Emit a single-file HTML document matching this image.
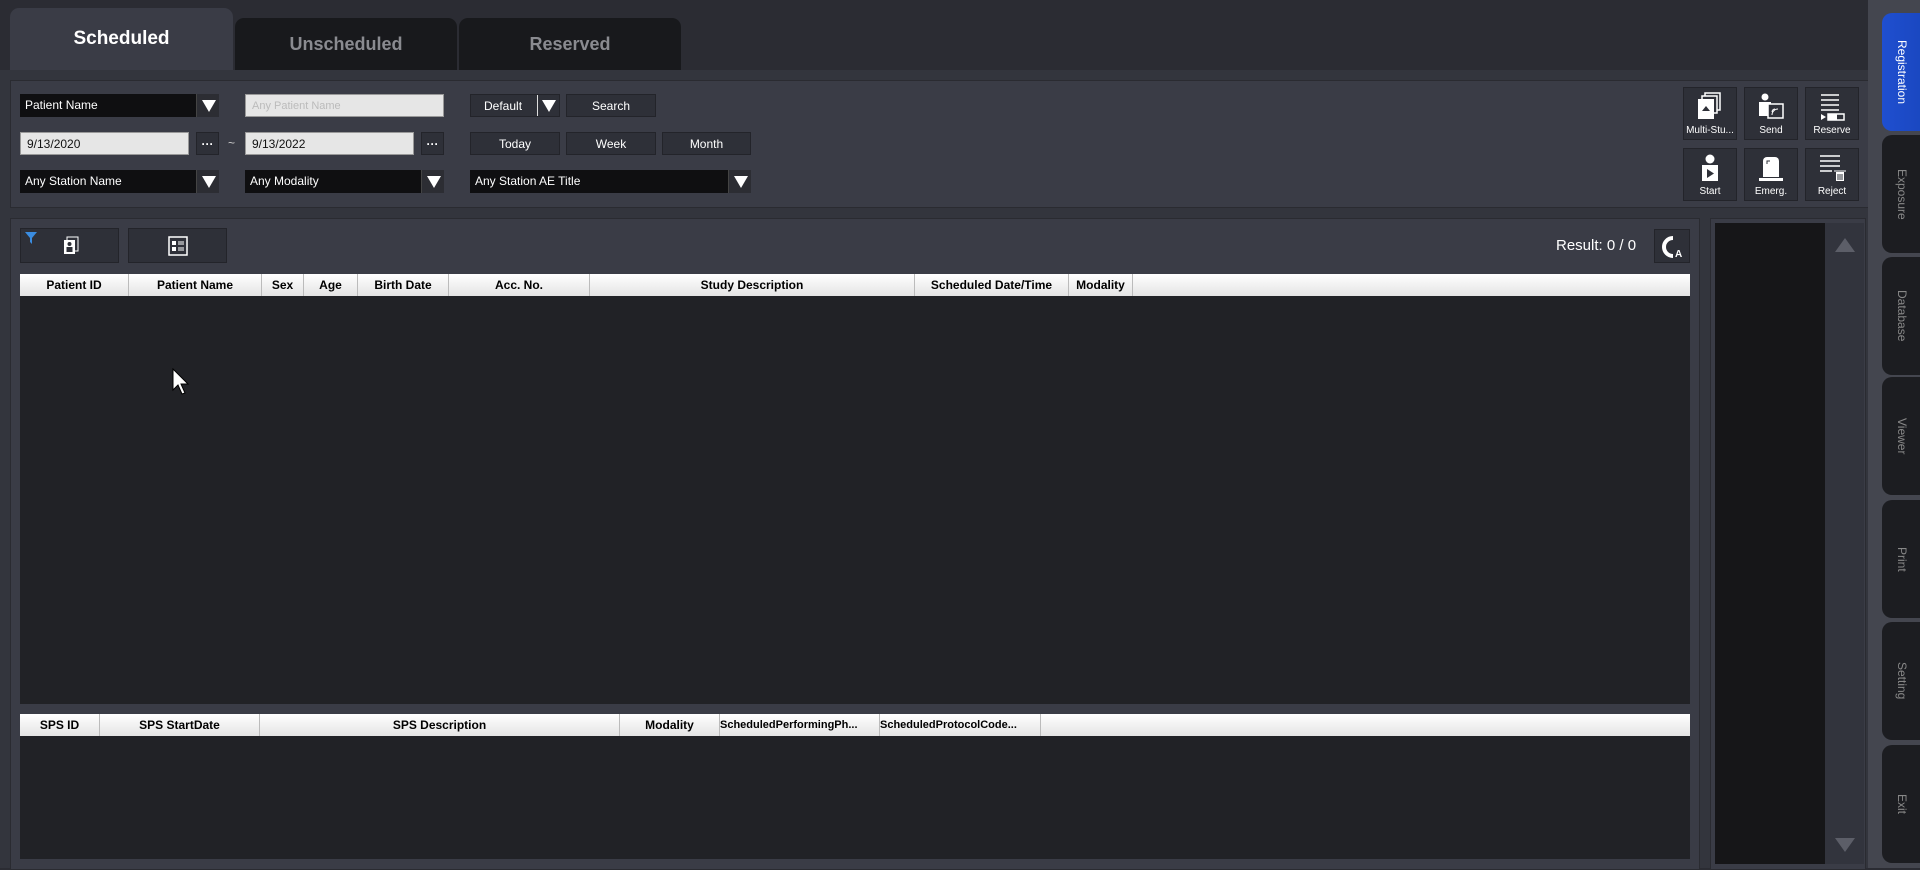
<!DOCTYPE html>
<html><head><meta charset="utf-8"><style>
*{box-sizing:border-box;margin:0;padding:0}
body{width:1920px;height:868px;background:#2b2c33;position:relative;overflow:hidden;font-family:"Liberation Sans",sans-serif;font-size:12px;color:#fff}
.a{position:absolute}
.tab{position:absolute;border-radius:9px 9px 0 0;text-align:center;font-weight:bold;font-size:18px}
.panel{background:#3a3c46;border:1px solid #2a2b31}
.dd{position:absolute;background:#0f0f11;height:23px;color:#fff;font-size:12px;line-height:23px;padding-left:5px}
.dd .ar{position:absolute;right:0;top:0;width:23px;height:23px;background:#2c2d33;border-left:1px solid #444}
.dd .ar:after{content:"";position:absolute;left:5px;top:6px;border-left:7px solid transparent;border-right:7px solid transparent;border-top:12px solid #fff}
.inp{position:absolute;background:#e6e6e6;height:23px;color:#111;line-height:23px;padding-left:6px;border:1px solid #999}
.btn{position:absolute;background:#2e3038;border:1px solid #23242a;height:23px;line-height:22px;text-align:center;color:#fff;font-size:12px}
.ab{position:absolute;width:54px;height:53px;background:#2e3038;border:1px solid #23242a;font-size:10px;text-align:center}
.ab span{position:absolute;bottom:3px;left:0;right:0}
.hdr{position:absolute;height:22px;background:linear-gradient(#fff,#e4e4e4);color:#000;font-weight:bold;font-size:12px}
.hdr div{position:absolute;top:0;height:22px;line-height:22px;text-align:center;border-right:1px solid #bbb;white-space:nowrap;overflow:hidden}
.side{position:absolute;left:1882px;width:40px;height:118px;background:#1c1d21;border-radius:10px 0 0 10px;display:flex;align-items:center;justify-content:center}
.side div{writing-mode:vertical-rl;color:#888;font-size:12px}
</style></head><body>
<div class="a" style="left:0;top:70px;width:1868px;height:798px;background:#33353d"></div>
<div class="tab" style="left:10px;top:8px;width:223px;height:62px;background:#3a3c46;line-height:62px;color:#fff;font-size:19px">Scheduled</div>
<div class="tab" style="left:235px;top:18px;width:222px;height:52px;background:#18191c;line-height:52px;color:#8a8b90">Unscheduled</div>
<div class="tab" style="left:459px;top:18px;width:222px;height:52px;background:#18191c;line-height:52px;color:#8a8b90">Reserved</div>

<div class="a panel" style="left:10px;top:80px;width:1860px;height:128px"></div>
<div class="dd" style="left:20px;top:94px;width:199px">Patient Name<div class="ar"></div></div>
<div class="inp" style="left:245px;top:94px;width:199px;color:#bbb;font-size:11px">Any Patient Name</div>
<div class="btn" style="left:470px;top:94px;width:90px;text-align:left;padding-left:13px">Default<div class="ar" style="position:absolute;right:0;top:0;width:22px;height:21px;border-left:1px solid #ddd"><div style="position:absolute;left:4px;top:5px;border-left:7px solid transparent;border-right:7px solid transparent;border-top:12px solid #fff"></div></div></div>
<div class="btn" style="left:566px;top:94px;width:90px">Search</div>
<div class="inp" style="left:20px;top:132px;width:169px">9/13/2020</div>
<div class="btn" style="left:196px;top:132px;width:23px;font-weight:bold">···</div>
<div class="a" style="left:228px;top:136px;color:#ccc">~</div>
<div class="inp" style="left:245px;top:132px;width:169px">9/13/2022</div>
<div class="btn" style="left:421px;top:132px;width:23px;font-weight:bold">···</div>
<div class="btn" style="left:470px;top:132px;width:90px">Today</div>
<div class="btn" style="left:566px;top:132px;width:90px">Week</div>
<div class="btn" style="left:662px;top:132px;width:89px">Month</div>
<div class="dd" style="left:20px;top:170px;width:199px">Any Station Name<div class="ar"></div></div>
<div class="dd" style="left:245px;top:170px;width:199px">Any Modality<div class="ar"></div></div>
<div class="dd" style="left:470px;top:170px;width:281px">Any Station AE Title<div class="ar"></div></div>

<div class="ab" style="left:1683px;top:87px"><svg width="30" height="30" style="margin-top:4px" viewBox="0 0 30 30"><rect x="10" y="1" width="15" height="17" fill="none" stroke="#fff" stroke-width="1.5"/><rect x="7" y="4" width="15" height="17" fill="#2e3038" stroke="#fff" stroke-width="1.5"/><rect x="3" y="7" width="16" height="20" fill="#fff"/><path d="M7 19h8l-4-5z" fill="#2e3038"/></svg><span>Multi-Stu...</span></div>
<div class="ab" style="left:1744px;top:87px"><svg width="30" height="30" style="margin-top:4px" viewBox="0 0 30 30"><circle cx="9" cy="5" r="3.5" fill="#fff"/><path d="M3 10h12v14H3z" fill="#fff"/><rect x="12" y="12" width="15" height="14" fill="#2e3038" stroke="#fff" stroke-width="1.5"/><path d="M16 23a6 6 0 0 1 6-6M16 20a3 3 0 0 1 3-3" stroke="#fff" fill="none"/></svg><span>Send</span></div>
<div class="ab" style="left:1805px;top:87px"><svg width="30" height="30" style="margin-top:4px" viewBox="0 0 30 30"><path d="M4 3h18M4 8h18M4 13h18M4 18h18" stroke="#fff" stroke-width="1.5"/><path d="M4 22v6l5-3z" fill="#fff"/><rect x="11" y="22" width="16" height="6" fill="none" stroke="#fff" stroke-width="1.5"/><rect x="11" y="22" width="9" height="6" fill="#fff"/></svg><span>Reserve</span></div>
<div class="ab" style="left:1683px;top:148px"><svg width="30" height="30" style="margin-top:4px" viewBox="0 0 30 30"><circle cx="15" cy="6" r="4.5" fill="#fff"/><path d="M7 12h16v16H7z" fill="#fff"/><path d="M12 16v9l7-4.5z" fill="#2e3038"/></svg><span>Start</span></div>
<div class="ab" style="left:1744px;top:148px"><svg width="30" height="30" style="margin-top:4px" viewBox="0 0 30 30"><path d="M7 24V8a4 4 0 0 1 4-4h8a4 4 0 0 1 4 4v16z" fill="#fff"/><rect x="3" y="25" width="24" height="3" fill="#fff"/><path d="M11 11v-3h3" stroke="#2e3038" fill="none"/></svg><span>Emerg.</span></div>
<div class="ab" style="left:1805px;top:148px"><svg width="30" height="30" style="margin-top:4px" viewBox="0 0 30 30"><path d="M3 3h20M3 8h20M3 13h20M3 18h12" stroke="#fff" stroke-width="1.5"/><rect x="19" y="19" width="8" height="9" fill="#fff"/><path d="M17 18h12" stroke="#fff"/><path d="M21 21v6M23 21v6M25 21v6" stroke="#2e3038"/></svg><span>Reject</span></div>

<div class="a panel" style="left:10px;top:218px;width:1690px;height:652px"></div>
<div class="btn" style="left:20px;top:228px;width:99px;height:35px"><svg class="a" style="left:4px;top:3px" width="12" height="12"><path d="M0 0h12L7 6v6L5 10V6z" fill="#3a8ce0"/></svg><svg width="22" height="22" style="margin-top:6px" viewBox="0 0 22 22"><rect x="8" y="2" width="11" height="14" fill="none" stroke="#fff"/><rect x="5" y="5" width="11" height="14" fill="#fff"/><circle cx="10.5" cy="9" r="2" fill="#2e3038"/><rect x="7.5" y="12" width="6" height="5" fill="#2e3038"/></svg></div>
<div class="btn" style="left:128px;top:228px;width:99px;height:35px"><svg width="22" height="22" style="margin-top:6px" viewBox="0 0 22 22"><rect x="2" y="2" width="18" height="18" fill="none" stroke="#fff" stroke-width="1.5"/><rect x="5" y="6" width="4" height="4" fill="#fff"/><rect x="5" y="12" width="4" height="4" fill="#fff"/><path d="M11 7h6M11 9h6M11 13h6M11 15h6" stroke="#fff"/></svg></div>
<div class="a" style="left:1556px;top:237px;font-size:15px;color:#fff">Result: 0 / 0</div>
<div class="btn" style="left:1654px;top:229px;width:36px;height:34px"><svg width="26" height="26" style="margin-top:4px" viewBox="0 0 26 26"><path d="M14 4a9 9 0 1 0 0 18" stroke="#fff" stroke-width="4" fill="none"/><text x="16" y="23" font-size="10" font-weight="bold" fill="#fff" font-family="Liberation Sans">A</text></svg></div>

<div class="hdr" style="left:20px;top:274px;width:1670px">
<div style="left:0;width:109px">Patient ID</div><div style="left:109px;width:133px">Patient Name</div><div style="left:242px;width:42px">Sex</div><div style="left:284px;width:54px">Age</div><div style="left:338px;width:91px">Birth Date</div><div style="left:429px;width:141px">Acc. No.</div><div style="left:570px;width:325px">Study Description</div><div style="left:895px;width:154px">Scheduled Date/Time</div><div style="left:1049px;width:64px">Modality</div></div>
<div class="a" style="left:20px;top:296px;width:1670px;height:408px;background:#212226"></div>
<svg class="a" style="left:172px;top:368px" width="18" height="28" viewBox="0 0 18 28"><path d="M1 1v21l5-5 4 9 3-1-4-9h7z" fill="#fff" stroke="#000"/></svg>

<div class="hdr" style="left:20px;top:714px;width:1670px">
<div style="left:0;width:80px">SPS ID</div><div style="left:80px;width:160px">SPS StartDate</div><div style="left:240px;width:360px">SPS Description</div><div style="left:600px;width:100px">Modality</div><div style="left:700px;width:160px;font-size:11px;text-align:left">ScheduledPerformingPh...</div><div style="left:860px;width:161px;font-size:11px;text-align:left">ScheduledProtocolCode...</div></div>
<div class="a" style="left:20px;top:736px;width:1670px;height:123px;background:#212226"></div>

<div class="a panel" style="left:1710px;top:218px;width:156px;height:652px"></div>
<div class="a" style="left:1715px;top:223px;width:110px;height:641px;background:#161618"></div>
<div class="a" style="left:1825px;top:223px;width:39px;height:641px;background:#32343d"></div>
<div class="a" style="left:1835px;top:238px;border-left:10px solid transparent;border-right:10px solid transparent;border-bottom:14px solid #5c5e68"></div>
<div class="a" style="left:1835px;top:838px;border-left:10px solid transparent;border-right:10px solid transparent;border-top:14px solid #5c5e68"></div>

<div class="a" style="left:1868px;top:0;width:52px;height:868px;background:#44464f"></div>
<div class="side" style="top:13px;background:linear-gradient(90deg,#1f4fd0,#1a47c0);"><div style="color:#fff">Registration</div></div>
<div class="side" style="top:135px"><div>Exposure</div></div>
<div class="side" style="top:257px"><div>Database</div></div>
<div class="side" style="top:377px"><div>Viewer</div></div>
<div class="side" style="top:500px"><div>Print</div></div>
<div class="side" style="top:622px"><div>Setting</div></div>
<div class="side" style="top:745px"><div>Exit</div></div>
</body></html>
